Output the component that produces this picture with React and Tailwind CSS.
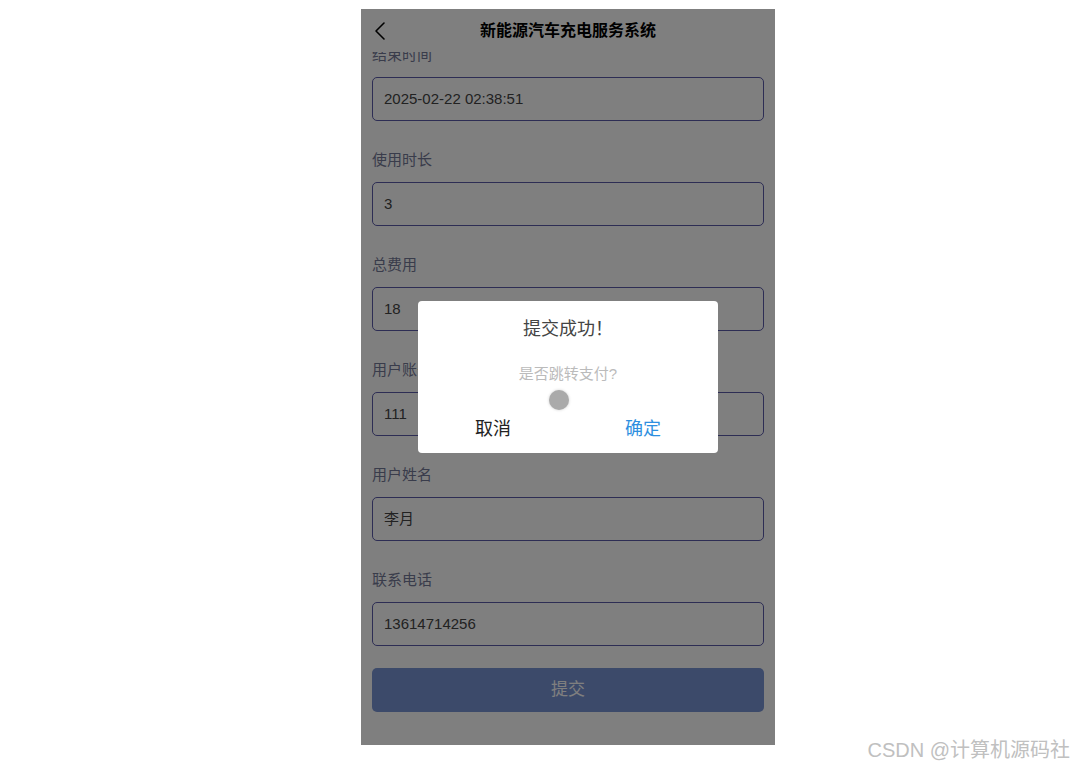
import React from "react";

const fields = [
  { label: "结束时间", value: "2025-02-22 02:38:51" },
  { label: "使用时长", value: "3" },
  { label: "总费用", value: "18" },
  { label: "用户账号", value: "111" },
  { label: "用户姓名", value: "李月" },
  { label: "联系电话", value: "13614714256" },
];

const font = { fontFamily: '"Liberation Sans", "Noto Sans CJK SC", sans-serif' };

export default function App() {
  return (
    <div className="relative w-[1074px] h-[768px] bg-white overflow-hidden pt-[9px]" style={font}>
      <div className="relative ml-[361px] w-[414px] h-[736px] bg-white flex flex-col overflow-hidden">
        <div className="relative z-10 h-[43px] shrink-0 bg-white flex items-center justify-center">
          <svg className="absolute left-[12px] top-[12px]" width="14" height="20" viewBox="0 0 14 20" fill="none">
            <path d="M11 2 L3 10 L11 18" stroke="#000" strokeWidth="1.6" strokeLinecap="round" strokeLinejoin="round" />
          </svg>
          <span className="text-[16px] font-bold text-black">新能源汽车充电服务系统</span>
        </div>
        <div className="flex-1 overflow-hidden px-[11px]">
          <div className="-mt-[8px] flex flex-col">
            {fields.map((f) => (
              <div key={f.label} className="flex flex-col mb-[28px]">
                <div className="h-[22px] leading-[22px] text-[15px] text-[#737896] mb-[11px]">{f.label}</div>
                <div className="h-[44px] rounded-[5px] border border-[#5a5aa8] flex items-center px-[11px] text-[15px] text-[#444]">
                  {f.value}
                </div>
              </div>
            ))}
            <div className="-mt-[6px] h-[44px] rounded-[5px] bg-[#7894d4] flex items-center justify-center text-[17px] text-white">
              提交
            </div>
          </div>
        </div>
        <div className="absolute inset-0 z-20 bg-[#000000]/50 flex items-center justify-center">
          <div className="w-[300px] h-[152px] bg-white rounded-[4px] flex flex-col items-center -mt-[1px]">
            <div className="mt-[17px] h-[22px] leading-[22px] text-[18px] text-[#444]">提交成功！</div>
            <div className="mt-[25px] h-[18px] leading-[18px] text-[15px] text-[#bbb]">是否跳转支付?</div>
            <div className="mt-[7px] -ml-[18px] w-[20px] h-[20px] rounded-full bg-[#aaaaaa] shadow-[0_0_3px_#ccc]"></div>
            <div className="mt-[7px] w-full flex">
              <div className="w-1/2 text-center text-[18px] leading-[24px] text-[#222]">取消</div>
              <div className="w-1/2 text-center text-[18px] leading-[24px] text-[#2d8fe0]">确定</div>
            </div>
          </div>
        </div>
      </div>
      <div className="absolute right-[4px] top-[737px] text-[20px] leading-[26px] text-[#c0c0c0]">CSDN @计算机源码社</div>
    </div>
  );
}
